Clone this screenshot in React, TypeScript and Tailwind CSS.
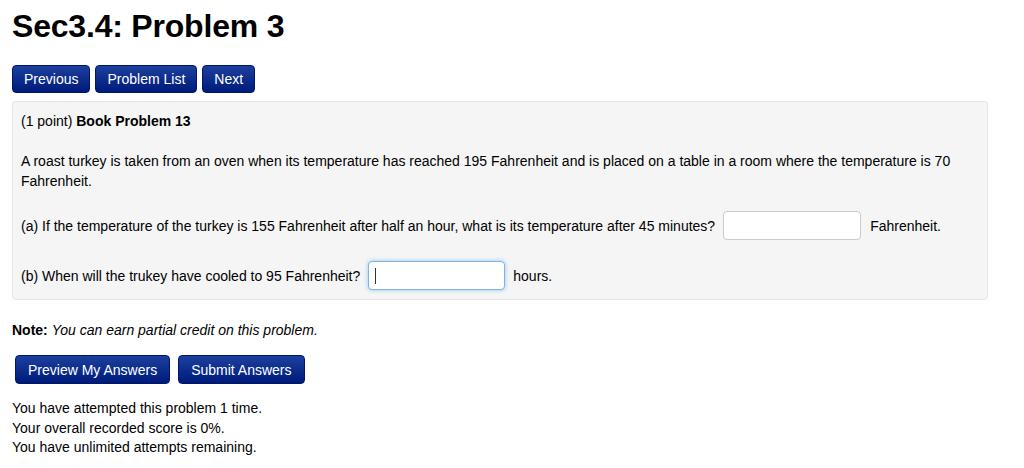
export default function App() {
  const btn =
    "h-[28px] px-[11px] rounded-[4px] border border-[#00166b] bg-linear-to-b from-[#1d3f9e] to-[#001a7a] text-white text-[14px] leading-none"
  const bigBtn =
    "h-[29px] px-[12px] rounded-[4px] border border-[#00166b] bg-linear-to-b from-[#1d3f9e] to-[#001a7a] text-white text-[14px] leading-none"

  return (
    <div className="w-[1024px] h-[468px] bg-white text-black font-['Liberation_Sans',Arial,sans-serif] text-[14px]">
      <div className="pl-[12px] pt-[8px]">
        <h1 className="text-[32px] font-bold leading-[36px] tracking-[-0.2px]">Sec3.4: Problem 3</h1>

        <div className="flex gap-[5px] mt-[21px]">
          <button className={btn}>Previous</button>
          <button className={btn}>Problem List</button>
          <button className={btn}>Next</button>
        </div>

        <div className="mt-[8px] w-[976px] h-[199px] bg-[#f5f5f5] border border-[#e3e3e3] rounded-[4px] px-[8px] pt-[9px] leading-[20px]">
          <p>
            (1 point) <b>Book Problem 13</b>
          </p>
          <p className="mt-[20px] pr-[20px]">
            A roast turkey is taken from an oven when its temperature has reached 195 Fahrenheit and is placed on a table in a room where the temperature is 70 Fahrenheit.
          </p>
          <div className="flex items-center mt-[20px]">
            <span>(a) If the temperature of the turkey is 155 Fahrenheit after half an hour, what is its temperature after 45 minutes?</span>
            <input className="ml-[8px] w-[138px] h-[29px] bg-white border border-[#cccccc] rounded-[4px] outline-none" />
            <span className="ml-[9px]">Fahrenheit.</span>
          </div>
          <div className="flex items-center mt-[21px]">
            <span>(b) When will the trukey have cooled to 95 Fahrenheit?</span>
            <div className="relative ml-[8px] w-[137px] h-[29px] bg-white border border-[#7fb2e6] rounded-[4px] shadow-[0_0_4px_rgba(82,168,236,0.6)]">
              <span className="absolute left-[6px] top-[6px] w-[1px] h-[16px] bg-[#333333]" />
            </div>
            <span className="ml-[8px]">hours.</span>
          </div>
        </div>

        <p className="mt-[20px] leading-[20px]">
          <b>Note:</b> <i>You can earn partial credit on this problem.</i>
        </p>

        <div className="flex gap-[8px] mt-[15px] ml-[3px]">
          <button className={bigBtn}>Preview My Answers</button>
          <button className={bigBtn}>Submit Answers</button>
        </div>

        <div className="mt-[15px] leading-[19.5px]">
          <p>You have attempted this problem 1 time.</p>
          <p>Your overall recorded score is 0%.</p>
          <p>You have unlimited attempts remaining.</p>
        </div>
      </div>
    </div>
  )
}
